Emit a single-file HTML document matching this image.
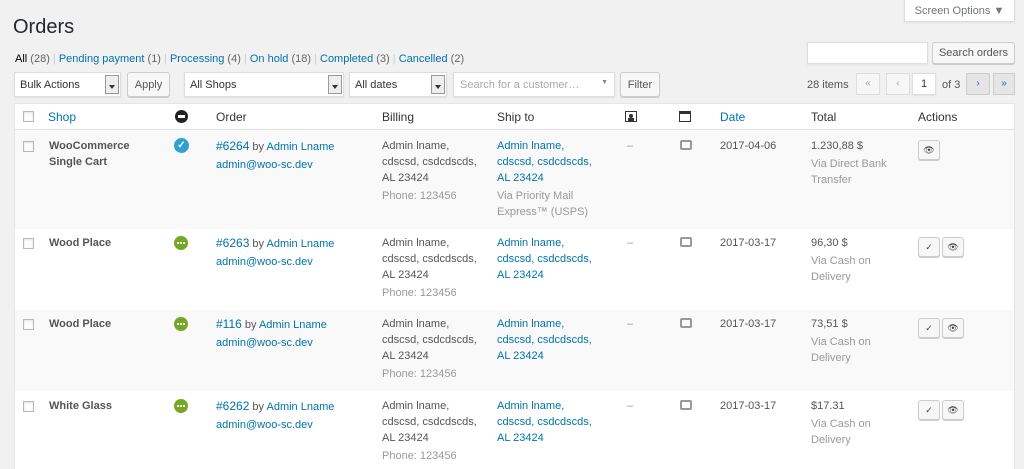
<!DOCTYPE html>
<html><head><meta charset="utf-8"><style>
*{box-sizing:border-box;margin:0;padding:0}
body{width:1024px;height:469px;background:#f1f1f1;font-family:"Liberation Sans",sans-serif;font-size:11px;color:#555;position:relative;overflow:hidden}
.a{position:absolute}
a,.l{color:#0073aa;text-decoration:none}
.box{position:absolute;background:#fff;border:1px solid #ddd;box-shadow:0 1px 2px rgba(0,0,0,.07)}
.btn{position:absolute;background:#f7f7f7;border:1px solid #ccc;border-radius:3px;box-shadow:0 1px 0 #ccc;color:#555;text-align:center}
.arrow{position:absolute;top:2px;right:1px;width:14px;bottom:2px;background:#eee;border:1px solid #999;}
.arrow:after{content:"";position:absolute;left:3px;top:9px;border:3px solid transparent;border-top:4px solid #333}
.cb{position:absolute;width:11px;height:11px;border:1px solid #b4b9be;background:#fdfdfd;box-shadow:inset 0 1px 2px rgba(0,0,0,.1)}
.row{position:absolute;left:14px;width:1001px}
.t{position:absolute;line-height:16px;font-size:11px}
.g{color:#999}
.dot{position:absolute;width:14px;height:14px;border-radius:50%;background:#73a724}
.dot:after{content:"";position:absolute;left:3px;top:6px;width:2px;height:2px;background:#fff;box-shadow:3px 0 #fff,6px 0 #fff}
.sm{position:absolute;width:22px;height:20px;background:#f7f7f7;border:1px solid #ccc;border-radius:3px;box-shadow:0 1px 0 #ccc;font-size:9px;text-align:center;line-height:18px;color:#444}
.scr{position:absolute;width:12px;height:10px;border:2px solid #999;border-radius:2px}
.pg{position:absolute;top:73px;height:22px;width:24px;border:1px solid #ddd;background:#f7f7f7;text-align:center;line-height:20px;color:#a0a5aa;font-size:10px}
</style></head><body>
<div class="box" style="left:904px;top:-1px;width:111px;height:23px;font-size:11px;line-height:22px;color:#72777c;text-align:center">Screen Options ▼</div>
<div class="a" style="left:13px;top:16px;font-size:20px;color:#23282d">Orders</div>
<div class="a" style="left:15px;top:53px;font-size:11px;color:#666"><span style="color:#000">All</span> (28) <span style="color:#ccc">|</span> <a>Pending payment</a> (1) <span style="color:#ccc">|</span> <a>Processing</a> (4) <span style="color:#ccc">|</span> <a>On hold</a> (18) <span style="color:#ccc">|</span> <a>Completed</a> (3) <span style="color:#ccc">|</span> <a>Cancelled</a> (2)</div>
<div class="box" style="left:807px;top:42px;width:121px;height:22px"></div>
<div class="btn" style="left:932px;top:42px;width:83px;height:22px;line-height:20px;font-size:11px">Search orders</div>
<div class="box" style="left:14px;top:72px;width:107px;height:25px;padding:6px 5px;font-size:11px;color:#333">Bulk Actions<div class="arrow"></div></div>
<div class="btn" style="left:127px;top:72px;width:43px;height:25px;line-height:25px;font-size:11px">Apply</div>
<div class="box" style="left:184px;top:72px;width:160px;height:25px;padding:6px 5px;font-size:11px;color:#333">All Shops<div class="arrow"></div></div>
<div class="box" style="left:349px;top:72px;width:98px;height:25px;padding:6px 5px;font-size:11px;color:#333">All dates<div class="arrow"></div></div>
<div class="box" style="left:453px;top:72px;width:162px;height:25px;padding:6px 6px;font-size:11px;color:#aaa">Search for a customer…<span style="position:absolute;right:6px;top:6px;font-size:7px;color:#888">▼</span></div>
<div class="btn" style="left:620px;top:72px;width:40px;height:25px;line-height:25px;font-size:11px">Filter</div>
<div class="a" style="left:807px;top:79px;font-size:11px">28 items</div>
<div class="pg" style="left:856px">«</div>
<div class="pg" style="left:886px">‹</div>
<div class="box" style="left:912px;top:73px;width:24px;height:22px;text-align:center;line-height:20px;color:#333;font-size:11px">1</div>
<div class="a" style="left:942px;top:79px;font-size:11px">of 3</div>
<div class="pg" style="left:966px;background:#e5e5e5;border-color:#ccc;color:#0073aa">›</div>
<div class="pg" style="left:993px;width:22px;background:#e5e5e5;border-color:#ccc;color:#0073aa">»</div>

<div class="row" style="top:103px;height:27px;background:#fff;border:1px solid #e5e5e5;border-bottom:1px solid #e1e1e1"></div>
<div class="cb" style="left:23px;top:111px"></div>
<div class="t" style="left:48px;top:109px;font-size:12px" ><a>Shop</a></div>
<div class="a" style="left:175px;top:110px;width:13px;height:13px;border-radius:50%;background:#222"><div style="position:absolute;left:3px;top:5px;width:7px;height:3px;background:#fff"></div></div>
<div class="t" style="left:216px;top:109px;font-size:12px;color:#333">Order</div>
<div class="t" style="left:382px;top:109px;font-size:12px;color:#333">Billing</div>
<div class="t" style="left:497px;top:109px;font-size:12px;color:#333">Ship to</div>
<div class="a" style="left:625px;top:111px;width:12px;height:11px;border:1px solid #333"><div style="position:absolute;left:3px;top:2px;width:4px;height:4px;background:#333;border-radius:50%"></div><div style="position:absolute;left:2px;top:6px;width:6px;height:3px;background:#333"></div></div>
<div class="a" style="left:679px;top:111px;width:12px;height:11px;border:1px solid #333;border-top:3px solid #333"></div>
<div class="t" style="left:720px;top:109px;font-size:12px"><a>Date</a></div>
<div class="t" style="left:811px;top:109px;font-size:12px;color:#333">Total</div>
<div class="t" style="left:918px;top:109px;font-size:12px;color:#333">Actions</div>

<!-- row1 -->
<div class="row" style="top:130px;height:99px;background:#f9f9f9;border-left:1px solid #e5e5e5;border-right:1px solid #e5e5e5"></div>
<div class="cb" style="left:23px;top:141px"></div>
<div class="t" style="left:49px;top:138px;font-weight:bold;color:#555">WooCommerce<br>Single Cart</div>
<div class="a" style="left:174px;top:138px;width:15px;height:15px;border-radius:50%;background:#2ea2cc;color:#fff;font-size:10px;text-align:center;line-height:15px;font-weight:bold">✓</div>
<div class="t" style="left:216px;top:138px"><a style="font-size:12px">#6264</a> by <a>Admin Lname</a><br><a style="line-height:20px">admin@woo-sc.dev</a></div>
<div class="t" style="left:382px;top:138px">Admin lname,<br>cdscsd, csdcdscds,<br>AL 23424<br><span class="g" style="line-height:20px">Phone: 123456</span></div>
<div class="t" style="left:497px;top:138px"><a>Admin lname,<br>cdscsd, csdcdscds,<br>AL 23424</a><br><span class="g" style="display:inline-block;margin-top:2px">Via Priority Mail<br>Express™ (USPS)</span></div>
<div class="t g" style="left:627px;top:138px">–</div>
<div class="scr" style="left:680px;top:140px"></div>
<div class="t" style="left:720px;top:138px">2017-04-06</div>
<div class="t" style="left:811px;top:138px">1.230,88 $<br><span class="g" style="display:inline-block;margin-top:2px">Via Direct Bank<br>Transfer</span></div>
<div class="sm" style="left:918px;top:140px">👁</div>

<!-- row2 -->
<div class="row" style="top:229px;height:81px;background:#fff;border-left:1px solid #e5e5e5;border-right:1px solid #e5e5e5"></div>
<div class="cb" style="left:23px;top:238px"></div>
<div class="t" style="left:49px;top:235px;font-weight:bold">Wood Place</div>
<div class="dot" style="left:174px;top:236px"></div>
<div class="t" style="left:216px;top:235px"><a style="font-size:12px">#6263</a> by <a>Admin Lname</a><br><a style="line-height:20px">admin@woo-sc.dev</a></div>
<div class="t" style="left:382px;top:235px">Admin lname,<br>cdscsd, csdcdscds,<br>AL 23424<br><span class="g" style="line-height:20px">Phone: 123456</span></div>
<div class="t" style="left:497px;top:235px"><a>Admin lname,<br>cdscsd, csdcdscds,<br>AL 23424</a></div>
<div class="t g" style="left:627px;top:235px">–</div>
<div class="scr" style="left:680px;top:237px"></div>
<div class="t" style="left:720px;top:235px">2017-03-17</div>
<div class="t" style="left:811px;top:235px">96,30 $<br><span class="g" style="display:inline-block;margin-top:2px">Via Cash on<br>Delivery</span></div>
<div class="sm" style="left:918px;top:237px">✓</div><div class="sm" style="left:942px;top:237px">👁</div>

<!-- row3 -->
<div class="row" style="top:310px;height:81px;background:#f9f9f9;border-left:1px solid #e5e5e5;border-right:1px solid #e5e5e5"></div>
<div class="cb" style="left:23px;top:319px"></div>
<div class="t" style="left:49px;top:316px;font-weight:bold">Wood Place</div>
<div class="dot" style="left:174px;top:317px"></div>
<div class="t" style="left:216px;top:316px"><a style="font-size:12px">#116</a> by <a>Admin Lname</a><br><a style="line-height:20px">admin@woo-sc.dev</a></div>
<div class="t" style="left:382px;top:316px">Admin lname,<br>cdscsd, csdcdscds,<br>AL 23424<br><span class="g" style="line-height:20px">Phone: 123456</span></div>
<div class="t" style="left:497px;top:316px"><a>Admin lname,<br>cdscsd, csdcdscds,<br>AL 23424</a></div>
<div class="t g" style="left:627px;top:316px">–</div>
<div class="scr" style="left:680px;top:318px"></div>
<div class="t" style="left:720px;top:316px">2017-03-17</div>
<div class="t" style="left:811px;top:316px">73,51 $<br><span class="g" style="display:inline-block;margin-top:2px">Via Cash on<br>Delivery</span></div>
<div class="sm" style="left:918px;top:318px">✓</div><div class="sm" style="left:942px;top:318px">👁</div>

<!-- row4 -->
<div class="row" style="top:391px;height:78px;background:#fff;border-left:1px solid #e5e5e5;border-right:1px solid #e5e5e5"></div>
<div class="cb" style="left:23px;top:401px"></div>
<div class="t" style="left:49px;top:398px;font-weight:bold">White Glass</div>
<div class="dot" style="left:174px;top:399px"></div>
<div class="t" style="left:216px;top:398px"><a style="font-size:12px">#6262</a> by <a>Admin Lname</a><br><a style="line-height:20px">admin@woo-sc.dev</a></div>
<div class="t" style="left:382px;top:398px">Admin lname,<br>cdscsd, csdcdscds,<br>AL 23424<br><span class="g" style="line-height:20px">Phone: 123456</span></div>
<div class="t" style="left:497px;top:398px"><a>Admin lname,<br>cdscsd, csdcdscds,<br>AL 23424</a></div>
<div class="t g" style="left:627px;top:398px">–</div>
<div class="scr" style="left:680px;top:400px"></div>
<div class="t" style="left:720px;top:398px">2017-03-17</div>
<div class="t" style="left:811px;top:398px">$17.31<br><span class="g" style="display:inline-block;margin-top:2px">Via Cash on<br>Delivery</span></div>
<div class="sm" style="left:918px;top:400px">✓</div><div class="sm" style="left:942px;top:400px">👁</div>
</body></html>
